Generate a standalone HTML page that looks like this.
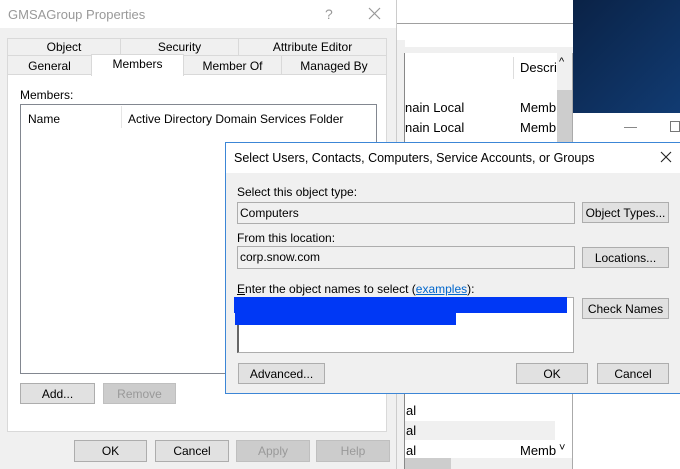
<!DOCTYPE html>
<html><head><style>
*{margin:0;padding:0;box-sizing:border-box}
body{width:680px;height:469px;overflow:hidden;position:relative;background:#fff;font-family:"Liberation Sans",sans-serif;font-size:12px;color:#000}
.a{position:absolute;white-space:nowrap}
.btn{position:absolute;background:#e1e1e1;border:1px solid #adadad;text-align:center;line-height:20px}
.dis{color:#999;background:#ccc;border-color:#bfbfbf}
.tab{position:absolute;background:#f0f0f0;border:1px solid #d9d9d9;text-align:center}
</style></head><body>
<div class="a" style="left:573px;top:0;width:107px;height:113px;background:linear-gradient(135deg,#0a2246,#113b72)"></div>
<div class="a" style="left:624px;top:119px;color:#777;font-size:13px">—</div>
<div class="a" style="left:670px;top:121px;width:10px;height:11px;border:1px solid #777"></div>
<div class="a" style="left:397px;top:23px;width:176px;height:1px;background:#a0a0a0"></div>
<div class="a" style="left:397px;top:47px;width:176px;height:6px;background:#f0f0f0"></div>
<div class="a" style="left:397px;top:40px;width:8px;height:429px;background:#f0f0f0"></div>
<div class="a" style="left:404px;top:53px;width:1px;height:416px;background:#888"></div>
<div class="a" style="left:572px;top:53px;width:1px;height:416px;background:#aaa"></div>
<div class="a" style="left:513px;top:57px;width:1px;height:22px;background:#ddd"></div>
<div class="a" style="left:520px;top:60px;font-size:13px">Descri</div>
<div class="a" style="left:557px;top:53px;width:15px;height:340px;background:#f0f0f0"></div>
<div class="a" style="left:557px;top:90px;width:15px;height:60px;background:#cdcdcd"></div>
<div class="a" style="left:559px;top:56px;font-size:11px">^</div>
<div class="a" style="left:405px;top:100px;font-size:13px">nain Local</div>
<div class="a" style="left:520px;top:100px;font-size:13px">Memb</div>
<div class="a" style="left:405px;top:120px;font-size:13px">nain Local</div>
<div class="a" style="left:520px;top:120px;font-size:13px">Memb</div>
<div class="a" style="left:405px;top:421px;width:150px;height:19px;background:#f0f0f0"></div>
<div class="a" style="left:406px;top:403px;font-size:13px">al</div>
<div class="a" style="left:406px;top:423px;font-size:13px">al</div>
<div class="a" style="left:406px;top:443px;font-size:13px">al</div>
<div class="a" style="left:520px;top:443px;font-size:13px">Memb</div>
<div class="a" style="left:559px;top:442px;font-size:11px">˅</div>
<div class="a" style="left:405px;top:458px;width:167px;height:11px;background:#f0f0f0"></div>
<div class="a" style="left:405px;top:458px;width:46px;height:11px;background:#cdcdcd"></div>
<div class="a" style="left:0;top:0;width:397px;height:469px;background:#f0f0f0;border-right:1px solid #ccc"></div>
<div class="a" style="left:0;top:0;width:396px;height:28px;background:#fff"></div>
<div class="a" style="left:8px;top:7px;color:#999;font-size:13px">GMSAGroup Properties</div>
<div class="a" style="left:325px;top:6px;color:#999;font-size:14px">?</div>
<svg class="a" style="left:368px;top:7px" width="13" height="13"><path d="M1 1L12 12M12 1L1 12" stroke="#999" stroke-width="1.2"/></svg>
<div class="tab" style="left:7px;top:38px;width:114px;height:18px;line-height:17px">Object</div>
<div class="tab" style="left:120px;top:38px;width:119px;height:18px;line-height:17px">Security</div>
<div class="tab" style="left:238px;top:38px;width:149px;height:18px;line-height:17px">Attribute Editor</div>
<div class="tab" style="left:7px;top:55px;width:85px;height:20px;line-height:21px">General</div>
<div class="tab" style="left:183px;top:55px;width:99px;height:20px;line-height:21px">Member Of</div>
<div class="tab" style="left:281px;top:55px;width:106px;height:20px;line-height:21px">Managed By</div>
<div class="a" style="left:7px;top:74px;width:380px;height:358px;background:#fff;border:1px solid #d9d9d9"></div>
<div class="a" style="left:91px;top:54px;width:93px;height:22px;background:#fff;border:1px solid #d9d9d9;border-bottom:none;text-align:center;line-height:19px">Members</div>
<div class="a" style="left:20px;top:88px">Members:</div>
<div class="a" style="left:20px;top:104px;width:357px;height:270px;border:1px solid #828790"></div>
<div class="a" style="left:121px;top:106px;width:1px;height:22px;background:#e5e5e5"></div>
<div class="a" style="left:28px;top:112px">Name</div>
<div class="a" style="left:128px;top:112px">Active Directory Domain Services Folder</div>
<div class="btn" style="left:20px;top:383px;width:75px;height:21px">Add...</div>
<div class="btn dis" style="left:103px;top:383px;width:73px;height:21px">Remove</div>
<div class="btn" style="left:74px;top:440px;width:73px;height:22px">OK</div>
<div class="btn" style="left:155px;top:440px;width:74px;height:22px">Cancel</div>
<div class="btn dis" style="left:236px;top:440px;width:74px;height:22px">Apply</div>
<div class="btn dis" style="left:316px;top:440px;width:74px;height:22px">Help</div>
<div class="a" style="left:225px;top:142px;width:455px;height:252px;background:#f0f0f0;border:1px solid #3c86d6;border-right:none"></div>
<div class="a" style="left:226px;top:143px;width:454px;height:30px;background:#fff"></div>
<div class="a" style="left:234px;top:151px;font-size:12.5px">Select Users, Contacts, Computers, Service Accounts, or Groups</div>
<svg class="a" style="left:660px;top:151px" width="12" height="12"><path d="M1 1L11 11M11 1L1 11" stroke="#222" stroke-width="1.1"/></svg>
<div class="a" style="left:237px;top:185px">Select this object type:</div>
<div class="a" style="left:237px;top:202px;width:338px;height:22px;border:1px solid #adadad;padding:3px 2px">Computers</div>
<div class="btn" style="left:582px;top:202px;width:87px;height:21px">Object Types...</div>
<div class="a" style="left:237px;top:231px">From this location:</div>
<div class="a" style="left:237px;top:246px;width:338px;height:23px;border:1px solid #adadad;padding:3px 2px">corp.snow.com</div>
<div class="btn" style="left:582px;top:247px;width:87px;height:21px">Locations...</div>
<div class="a" style="left:237px;top:282px"><u>E</u>nter the object names to select (<span style="color:#0066cc;text-decoration:underline">examples</span>):</div>
<div class="a" style="left:237px;top:297px;width:337px;height:56px;background:#fff;border:1px solid #adadad;border-left:2px solid #666"></div>
<div class="a" style="left:234px;top:297px;width:333px;height:16px;background:#0038f5"></div>
<div class="a" style="left:235px;top:312px;width:221px;height:13px;background:#0038f5"></div>
<div class="btn" style="left:582px;top:298px;width:87px;height:21px">Check Names</div>
<div class="btn" style="left:238px;top:363px;width:87px;height:21px">Advanced...</div>
<div class="btn" style="left:516px;top:363px;width:72px;height:21px">OK</div>
<div class="btn" style="left:597px;top:363px;width:72px;height:21px">Cancel</div>
</body></html>
